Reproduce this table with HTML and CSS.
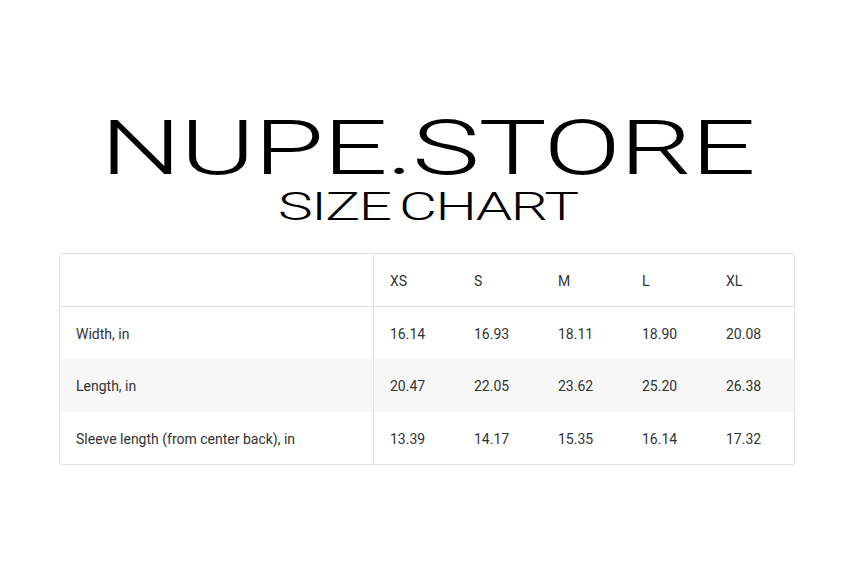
FILE: index.html
```html
<!DOCTYPE html>
<html>
<head>
<meta charset="utf-8">
<link rel="stylesheet" href="styles.css">
</head>
<body>
<div class="page">
  <header class="brand">
    <div class="brand-name"><span>NUPE.STORE</span></div>
    <div class="brand-sub"><span>SIZE CHART</span></div>
  </header>
  <table class="chart">
    <thead>
      <tr><th class="label"></th><th>XS</th><th>S</th><th>M</th><th>L</th><th>XL</th></tr>
    </thead>
    <tbody>
      <tr><td class="label">Width, in</td><td>16.14</td><td>16.93</td><td>18.11</td><td>18.90</td><td>20.08</td></tr>
      <tr class="alt"><td class="label">Length, in</td><td>20.47</td><td>22.05</td><td>23.62</td><td>25.20</td><td>26.38</td></tr>
      <tr><td class="label">Sleeve length (from center back), in</td><td>13.39</td><td>14.17</td><td>15.35</td><td>16.14</td><td>17.32</td></tr>
    </tbody>
  </table>
</div>
</body>
</html>
```
FILE: styles.css
```css
html, body { margin: 0; padding: 0; background: #fff; }
.page { width: 855px; height: 570px; padding-top: 108px; box-sizing: border-box; }
.brand { text-align: center; font-family: Roboto, "Liberation Sans", sans-serif; color: #000; }
.brand-name { font-size: 76px; font-weight: 300; line-height: 80px; height: 80px; }
.brand-name span { display: inline-block; transform: scaleX(1.505); letter-spacing: -1px; }
.brand-sub { font-size: 39px; font-weight: 300; line-height: 40px; height: 40px; margin-top: -1px; }
.brand-sub span { display: inline-block; transform: scaleX(1.5); word-spacing: -3px; letter-spacing: -1px; }
.chart {
  margin: 26px 0 0 59px; width: 736px; border-collapse: separate; border-spacing: 0;
  border: 1px solid #e2e2e2; border-radius: 3px; font-family: Roboto, "Liberation Sans", sans-serif;
  font-size: 14px; color: #333; table-layout: fixed;
}
.chart th, .chart td { height: 52.5px; padding: 2px 0 0 16px; text-align: left; font-weight: 400; box-sizing: border-box; }
.chart th.label, .chart td.label { width: 314px; border-right: 1px solid #e2e2e2; }
.chart th { border-bottom: 1px solid #e2e2e2; }
.chart tr.alt td { background: #f7f7f7; }
```
